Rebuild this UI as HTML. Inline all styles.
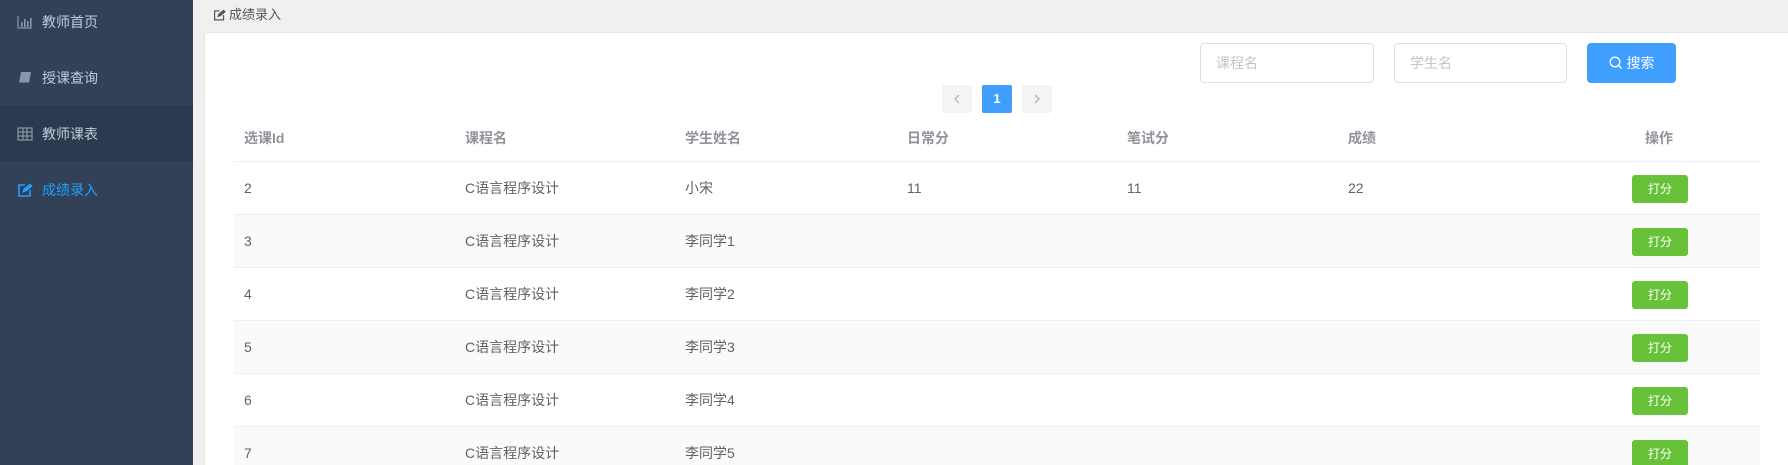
<!DOCTYPE html>
<html><head><meta charset="utf-8"><style>
*{margin:0;padding:0;box-sizing:border-box}
html,body{width:1788px;height:465px;overflow:hidden}
body{background:#f0f0f0;font-family:"Liberation Sans","Noto Sans CJK SC",sans-serif;font-size:14px;color:#606266;position:relative}
.wrap{position:absolute;left:0;top:0;width:1788px;height:465px;overflow:hidden}
.side{position:absolute;left:0;top:0;width:193px;height:465px;background:#324157}
.band{position:absolute;left:0;top:105px;width:193px;height:56px;background:#2c3a4f}
.item{position:absolute;left:0;width:193px;height:44px;line-height:44px;padding-left:42px;color:#bfcbd9;font-size:14px}
.item svg{position:absolute;left:17px;top:15px}
.crumb{position:absolute;left:213px;top:6px;font-size:13px;color:#555;line-height:18px}
.crumb svg{vertical-align:-2px;margin-right:3px}
.card{position:absolute;left:204px;top:32px;width:1600px;height:450px;background:#fff;border:1px solid #e4e4e4;border-radius:4px}
.inp{position:absolute;top:43px;height:40px;border:1px solid #dcdfe6;border-radius:4px;color:#c0c4cc;padding-left:15px;line-height:38px;font-size:14px;background:#fff}
.btn{position:absolute;left:1587px;top:43px;width:89px;height:40px;background:#409eff;border-radius:4px;color:#fff;text-align:center;line-height:40px;font-size:14px}
.pg{position:absolute;top:85px;width:30px;height:28px;background:#f4f4f5;border-radius:2px;text-align:center;line-height:28px;color:#c0c4cc;font-size:13px}
.pg svg{margin-top:9px}
.row{position:absolute;left:234px;width:1526px;border-bottom:1px solid #ebeef5}
.c{position:absolute;top:0}
.hd{color:#909399;font-weight:bold}
.ds{position:absolute;left:1398px;width:56px;height:28px;background:#67c23a;border-radius:3px;color:#fff;font-size:12px;text-align:center;line-height:28px}
</style></head><body><div class="wrap">
<div class="side">
 <div class="band"></div>
 <div class="item" style="top:0"><svg width="16" height="14" viewBox="0 0 16 14"><path d="M1 1v12h14" stroke="#8a96a8" fill="none" stroke-width="1.2"/><rect x="4" y="7" width="1.6" height="5" fill="#8a96a8"/><rect x="7" y="4" width="1.6" height="8" fill="#8a96a8"/><rect x="10" y="6" width="1.6" height="6" fill="#8a96a8"/><rect x="13" y="3" width="1.6" height="9" fill="#8a96a8"/></svg>教师首页</div>
 <div class="item" style="top:56px"><svg width="16" height="14" viewBox="0 0 16 14"><path d="M4 1h10l-2 11H2z" fill="#8a96a8"/><path d="M2 12h10" stroke="#324157"/></svg>授课查询</div>
 <div class="item" style="top:112px"><svg width="16" height="14" viewBox="0 0 16 14" fill="none" stroke="#8a96a8" stroke-width="1.2"><rect x="1" y="1" width="14" height="12"/><path d="M1 5h14M1 9h14M6 1v12M10 1v12"/></svg>教师课表</div>
 <div class="item" style="top:168px;color:#20a0ff"><svg width="16" height="14" viewBox="0 0 16 14" fill="none" stroke="#20a0ff" stroke-width="1.6"><path d="M8 2H2v11h11V7"/><path d="M6 9l1-3 6-5 2 2-6 5z" fill="#20a0ff" stroke-width="1"/></svg>成绩录入</div>
</div>
<div class="crumb"><svg width="13" height="12" viewBox="0 0 16 14" fill="none" stroke="#555" stroke-width="1.5"><path d="M8 2H2v11h11V7"/><path d="M6 9l1-3 6-5 2 2-6 5z" fill="#555" stroke-width="1"/></svg>成绩录入</div>
<div class="card"></div>
<div class="inp" style="left:1200px;width:174px">课程名</div>
<div class="inp" style="left:1394px;width:173px">学生名</div>
<div class="btn"><svg width="14" height="14" viewBox="0 0 14 14" style="vertical-align:-2px;margin-right:4px" fill="none" stroke="#fff" stroke-width="1.4"><circle cx="6" cy="6" r="4.8"/><path d="M9.5 9.5l3 3"/></svg>搜索</div>
<div class="pg" style="left:942px"><svg width="8" height="10" viewBox="0 0 8 10"><path d="M6 1L2 5l4 4" fill="none" stroke="#b4bccc" stroke-width="1.5"/></svg></div>
<div class="pg" style="left:982px;background:#409eff;color:#fff;font-weight:bold">1</div>
<div class="pg" style="left:1022px"><svg width="8" height="10" viewBox="0 0 8 10"><path d="M2 1l4 4-4 4" fill="none" stroke="#b4bccc" stroke-width="1.5"/></svg></div>

<div class="row hd" style="top:114px;height:48px;line-height:48px">
 <span class="c" style="left:10px">选课Id</span><span class="c" style="left:231px">课程名</span><span class="c" style="left:451px">学生姓名</span><span class="c" style="left:673px">日常分</span><span class="c" style="left:893px">笔试分</span><span class="c" style="left:1114px">成绩</span><span class="c" style="left:1411px">操作</span>
</div>
<div class="row" style="top:162px;height:53px;line-height:53px"><span class="c" style="left:10px">2</span><span class="c" style="left:231px">C语言程序设计</span><span class="c" style="left:451px">小宋</span><span class="c" style="left:673px">11</span><span class="c" style="left:893px">11</span><span class="c" style="left:1114px">22</span><span class="ds" style="top:13px">打分</span></div>
<div class="row" style="top:215px;height:53px;line-height:53px;background:#fafafa"><span class="c" style="left:10px">3</span><span class="c" style="left:231px">C语言程序设计</span><span class="c" style="left:451px">李同学1</span><span class="ds" style="top:13px">打分</span></div>
<div class="row" style="top:268px;height:53px;line-height:53px"><span class="c" style="left:10px">4</span><span class="c" style="left:231px">C语言程序设计</span><span class="c" style="left:451px">李同学2</span><span class="ds" style="top:13px">打分</span></div>
<div class="row" style="top:321px;height:53px;line-height:53px;background:#fafafa"><span class="c" style="left:10px">5</span><span class="c" style="left:231px">C语言程序设计</span><span class="c" style="left:451px">李同学3</span><span class="ds" style="top:13px">打分</span></div>
<div class="row" style="top:374px;height:53px;line-height:53px"><span class="c" style="left:10px">6</span><span class="c" style="left:231px">C语言程序设计</span><span class="c" style="left:451px">李同学4</span><span class="ds" style="top:13px">打分</span></div>
<div class="row" style="top:427px;height:53px;line-height:53px;background:#fafafa"><span class="c" style="left:10px">7</span><span class="c" style="left:231px">C语言程序设计</span><span class="c" style="left:451px">李同学5</span><span class="ds" style="top:13px">打分</span></div>
</div></body></html>
